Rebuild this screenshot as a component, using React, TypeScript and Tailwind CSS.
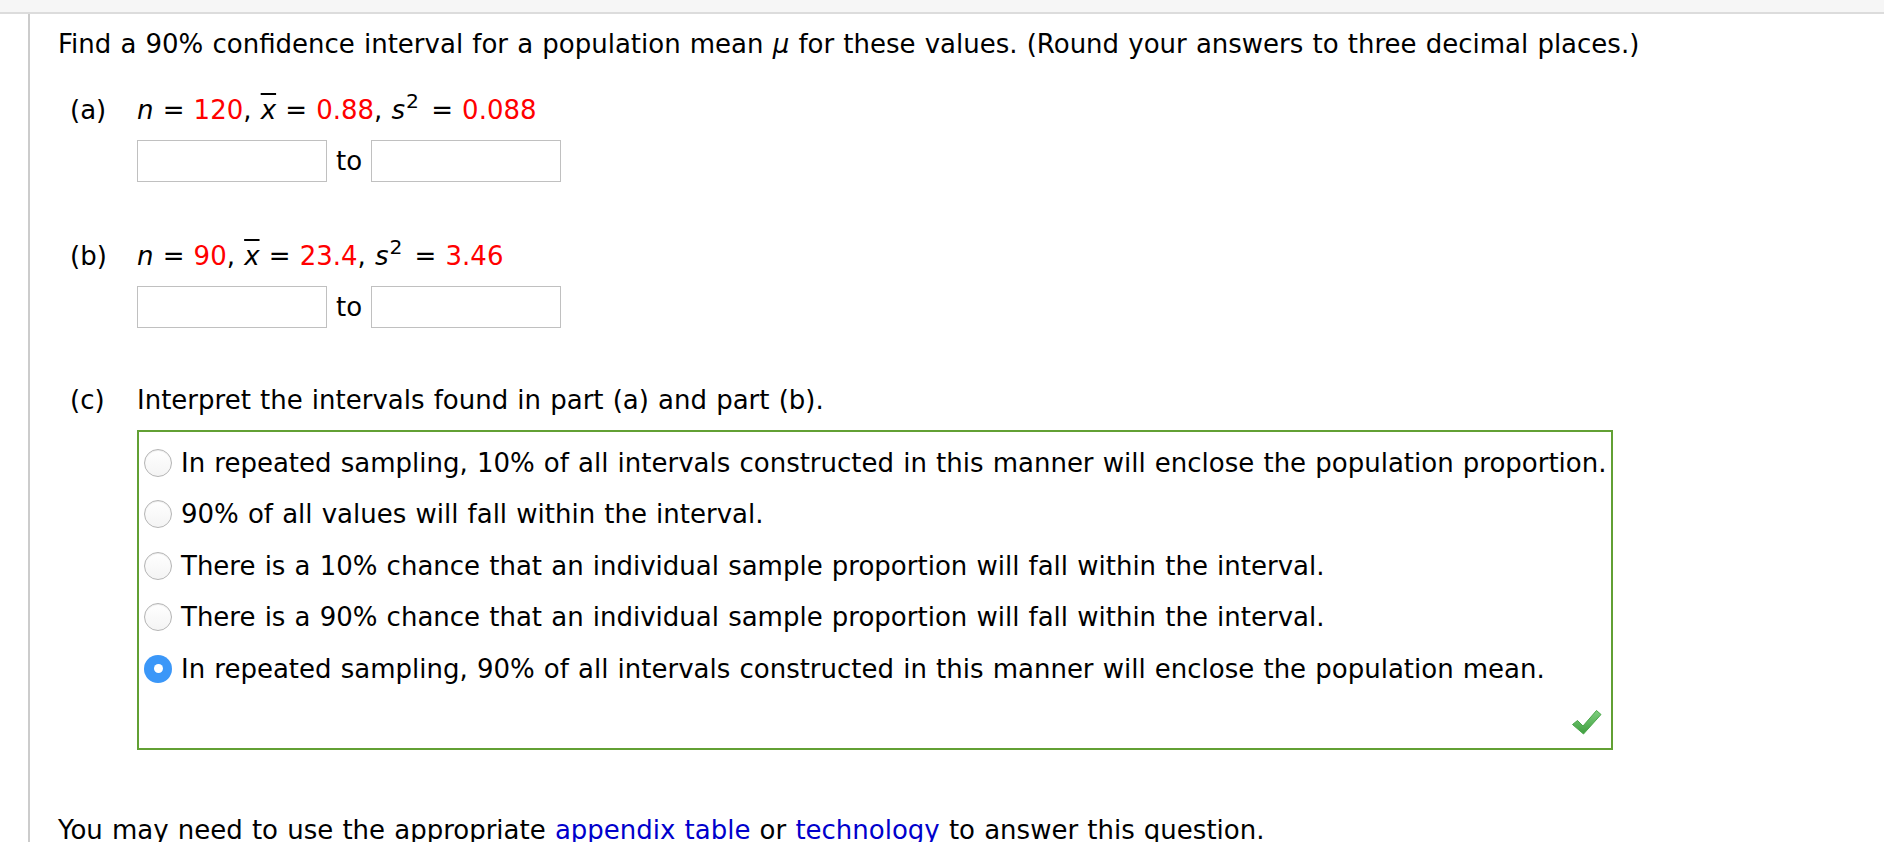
import React from 'react'

const options = [
  'In repeated sampling, 10% of all intervals constructed in this manner will enclose the population proportion.',
  '90% of all values will fall within the interval.',
  'There is a 10% chance that an individual sample proportion will fall within the interval.',
  'There is a 90% chance that an individual sample proportion will fall within the interval.',
  'In repeated sampling, 90% of all intervals constructed in this manner will enclose the population mean.',
]

function Red({ children }: { children: React.ReactNode }) {
  return <span className="text-[#ff0000]">{children}</span>
}

function XBar() {
  return <span className="italic overline decoration-[2px]">x</span>
}

function SSquared() {
  return (
    <>
      <span className="italic">s</span>
      <span className="relative top-[-0.55em] text-[0.78em] leading-none pl-[1px] pr-[3px]">2</span>
    </>
  )
}

function Radio({ checked }: { checked: boolean }) {
  if (checked) {
    return (
      <span className="w-[28px] h-[28px] rounded-full bg-[#3b97f8] flex items-center justify-center shrink-0">
        <span className="w-[9px] h-[9px] rounded-full bg-white" />
      </span>
    )
  }
  return (
    <span className="w-[28px] h-[28px] rounded-full border-[1.5px] border-[#b5b5b5] bg-gradient-to-b from-white to-[#f4f4f4] shadow-[inset_0_1px_1px_rgba(0,0,0,0.08)] shrink-0" />
  )
}

function AnswerInputs() {
  return (
    <div className="flex items-center gap-[9px] ml-[79px]">
      <div className="w-[190px] h-[42px] border border-[#c0c0c0] bg-white" />
      <span className="leading-[30px]">to</span>
      <div className="w-[190px] h-[42px] border border-[#c0c0c0] bg-white" />
    </div>
  )
}

function CheckMark() {
  return (
    <svg width="31" height="28" viewBox="0 0 31 28">
      <defs>
        <linearGradient id="chk" x1="0" y1="0" x2="0" y2="1">
          <stop offset="0" stopColor="#7fd07f" />
          <stop offset="1" stopColor="#3f9e3f" />
        </linearGradient>
      </defs>
      <path
        d="M1.5 16.5 L6.5 12.5 L12 18 L25.5 2.5 L30 6.5 L12.5 26 Z"
        fill="url(#chk)"
        stroke="#4aa64a"
        strokeWidth="1"
        strokeLinejoin="round"
      />
    </svg>
  )
}

export default function App() {
  return (
    <div className="h-screen overflow-hidden bg-white text-black text-[26px] font-['DejaVu_Sans','Verdana',sans-serif] [word-spacing:0.9px]">
      <div className="h-[14px] bg-[#f6f6f6] border-b-2 border-[#dcdcdc]" />

      <div className="ml-[28px] border-l-2 border-[#cccccc] pl-[28px] pt-[15px] pb-[40px]">
        {/* Question */}
        <p className="leading-[30px]">
          Find a 90% confidence interval for a population mean <span className="italic">μ</span> for these
          values. (Round your answers to three decimal places.)
        </p>

        {/* (a) */}
        <div className="flex leading-[30px] mt-[36px]">
          <span className="w-[67px] ml-[12px]">(a)</span>
          <span>
            <span className="italic">n</span> = <Red>120</Red>, <XBar /> = <Red>0.88</Red>, <SSquared /> ={' '}
            <Red>0.088</Red>
          </span>
        </div>
        <div className="mt-[15px]">
          <AnswerInputs />
        </div>

        {/* (b) */}
        <div className="flex leading-[30px] mt-[59px]">
          <span className="w-[67px] ml-[12px]">(b)</span>
          <span>
            <span className="italic">n</span> = <Red>90</Red>, <XBar /> = <Red>23.4</Red>, <SSquared /> ={' '}
            <Red>3.46</Red>
          </span>
        </div>
        <div className="mt-[15px]">
          <AnswerInputs />
        </div>

        {/* (c) */}
        <div className="flex leading-[30px] mt-[57px]">
          <span className="w-[67px] ml-[12px]">(c)</span>
          <span>Interpret the intervals found in part (a) and part (b).</span>
        </div>

        <div className="ml-[79px] mt-[15px] w-[1476px] border-2 border-[#62a034] pt-[5px] pb-[12px] pr-[9px]">
          {options.map((text, i) => (
            <div key={i} className="flex items-center h-[51.5px] pl-[5px] gap-[9px]">
              <Radio checked={i === options.length - 1} />
              <span className="leading-[30px] whitespace-nowrap">{text}</span>
            </div>
          ))}
          <div className="flex justify-end mt-[13px]">
            <CheckMark />
          </div>
        </div>

        {/* Footer note */}
        <p className="leading-[30px] mt-[65px]">
          You may need to use the appropriate <span className="text-[#0000cc]">appendix table</span> or{' '}
          <span className="text-[#0000cc]">technology</span> to answer this question.
        </p>
      </div>
    </div>
  )
}
